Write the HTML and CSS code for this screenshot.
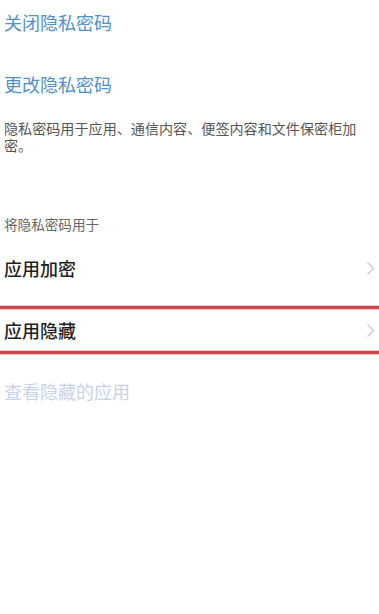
FILE: index.html
```html
<!DOCTYPE html>
<html lang="zh">
<head>
<meta charset="utf-8">
<link rel="stylesheet" href="styles.css">
</head>
<body>
<div class="page">
  <div class="link first">关闭隐私密码</div>
  <div class="link second">更改隐私密码</div>
  <p class="desc">隐私密码用于应用、通信内容、便签内容和文件保密柜加密。</p>
  <div class="label">将隐私密码用于</div>
  <div class="item first-item">
    <span>应用加密</span>
    <svg class="chev" width="9" height="15" viewBox="0 0 9 15"><path d="M1.5 1.5 L7.5 7.5 L1.5 13.5" fill="none" stroke="#c9c9c9" stroke-width="1.3"/></svg>
  </div>
  <div class="item highlight">
    <span>应用隐藏</span>
    <svg class="chev" width="9" height="15" viewBox="0 0 9 15"><path d="M1.5 1.5 L7.5 7.5 L1.5 13.5" fill="none" stroke="#c9c9c9" stroke-width="1.3"/></svg>
  </div>
  <div class="item faded">查看隐藏的应用</div>
</div>
</body>
</html>
```
FILE: styles.css
```css
html, body {
  margin: 0;
  padding: 0;
  background: #ffffff;
}
.page {
  font-family: "Noto Sans CJK SC", "Noto Sans", sans-serif;
  padding-left: 4px;
  overflow: hidden;
  width: 379px;
  box-sizing: border-box;
}
.link {
  height: 44px;
  line-height: 44px;
  font-size: 18px;
  color: #4f90d3;
}
.second {
  margin-top: 18px;
}
.desc {
  margin: 14px 0 0 0;
  width: 362px;
  font-size: 14.1px;
  line-height: 17px;
  color: #555555;
}
.label {
  margin-top: 60px;
  height: 20px;
  line-height: 20px;
  font-size: 13.6px;
  color: #666666;
}
.item {
  height: 44px;
  display: flex;
  align-items: center;
  justify-content: space-between;
  font-size: 18px;
  font-weight: 500;
  color: #1f1f1f;
  padding-right: 4px;
}
.first-item {
  margin-top: 12px;
}
.highlight {
  margin-top: 16px;
  margin-left: -4px;
  padding-left: 4px;
  height: 42px;
  border-top: 3px solid #c9464b;
  border-bottom: 3px solid #c9464b;
  box-shadow: 0 -1px 0 #f2c6c8, 0 1px 0 #f2c6c8, inset 0 1px 0 #f2c6c8, inset 0 -1px 0 #f2c6c8;
}
.faded {
  margin-top: 15px;
  font-weight: 400;
  color: #c7d3ec;
}
.chev {
  display: block;
}
```
